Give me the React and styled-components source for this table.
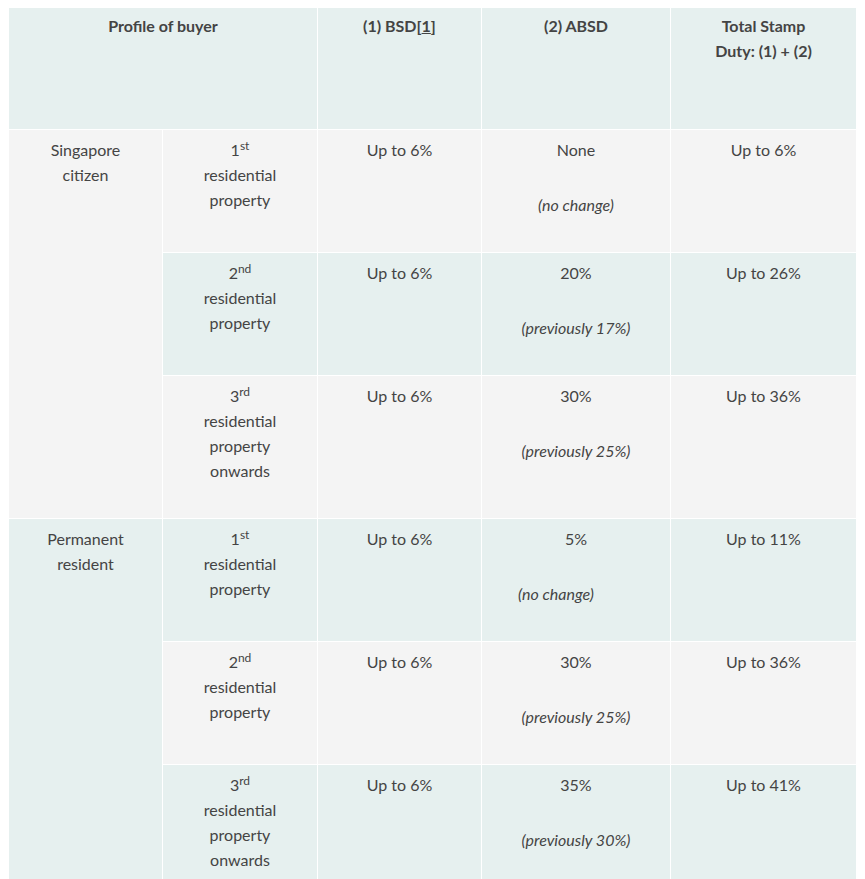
import React from 'react';
import styled, { createGlobalStyle } from 'styled-components';

const GlobalStyle = createGlobalStyle`
  body {
    margin: 8px;
    background: #fff;
    font-family: Lato, "Open Sans", sans-serif;
    color: #444;
  }
`

const Table = styled.table`
  width: 100%;
  border-collapse: collapse;
  border: 1px solid #fff;
  font-size: 16px;
  line-height: 25px;
  margin-top: -2px;
  sup {
    position: relative;
    top: -0.5em;
    font-size: 75%;
    line-height: 0;
    vertical-align: baseline;
  }
`

const Row = styled.tr`
  background: ${p => (p.$tint ? '#e6f0ef' : '#f4f4f4')};
`

const HeadCell = styled.th`
  height: 111px;
  padding: 6px 10px 5px;
  border: 1px solid #fff;
  vertical-align: top;
  text-align: center;
  font-weight: 700;
  color: #444;
  a {
    color: #444;
    text-decoration: underline;
  }
`

const Cell = styled.td`
  padding: 7px 10px 5px;
  border: 1px solid #fff;
  vertical-align: top;
  text-align: center;
`

const Para = styled.p`
  margin: 0 0 30px;
  padding-right: ${p => (p.$shift ? '40px' : '0')};
`

const Note = styled(Para)`
  font-style: italic;
`

const ordinals = [
  ['1', 'st', false],
  ['2', 'nd', false],
  ['3', 'rd', true],
];

const groups = [
  {
    who: ['Singapore', 'citizen'],
    rows: [
      { absd: 'None', note: '(no change)', total: 'Up to 6%' },
      { absd: '20%', note: '(previously 17%)', total: 'Up to 26%' },
      { absd: '30%', note: '(previously 25%)', total: 'Up to 36%' },
    ],
  },
  {
    who: ['Permanent', 'resident'],
    rows: [
      { absd: '5%', note: '(no change)', total: 'Up to 11%', shift: true },
      { absd: '30%', note: '(previously 25%)', total: 'Up to 36%' },
      { absd: '35%', note: '(previously 30%)', total: 'Up to 41%' },
    ],
  },
];

function PropertyLabel({ index }) {
  const [num, suffix, onwards] = ordinals[index];
  return (
    <Para>
      {num}<sup>{suffix}</sup><br />
      residential<br />
      property
      {onwards && <><br />onwards</>}
    </Para>
  );
}

export default function App() {
  let stripe = 0;
  return (
    <>
      <GlobalStyle />
      <Table>
        <colgroup>
          <col style={{ width: '154px' }} />
          <col style={{ width: '155px' }} />
          <col style={{ width: '164px' }} />
          <col style={{ width: '189px' }} />
          <col />
        </colgroup>
        <thead>
          <Row $tint>
            <HeadCell colSpan={2}>Profile of buyer</HeadCell>
            <HeadCell>(1) BSD[<a href="#note-1">1</a>]</HeadCell>
            <HeadCell>(2) ABSD</HeadCell>
            <HeadCell>Total Stamp<br />Duty: (1) + (2)</HeadCell>
          </Row>
        </thead>
        <tbody>
          {groups.map(group =>
            group.rows.map((row, i) => {
              stripe += 1;
              const tint = stripe % 2 === 0;
              return (
                <Row key={group.who[0] + i} $tint={tint}>
                  {i === 0 && (
                    <Cell rowSpan={3}>
                      <Para>{group.who[0]}<br />{group.who[1]}</Para>
                    </Cell>
                  )}
                  <Cell><PropertyLabel index={i} /></Cell>
                  <Cell><Para>Up to 6%</Para></Cell>
                  <Cell>
                    <Para>{row.absd}</Para>
                    <Note $shift={row.shift}>{row.note}</Note>
                  </Cell>
                  <Cell><Para>{row.total}</Para></Cell>
                </Row>
              );
            })
          )}
        </tbody>
      </Table>
    </>
  );
}
